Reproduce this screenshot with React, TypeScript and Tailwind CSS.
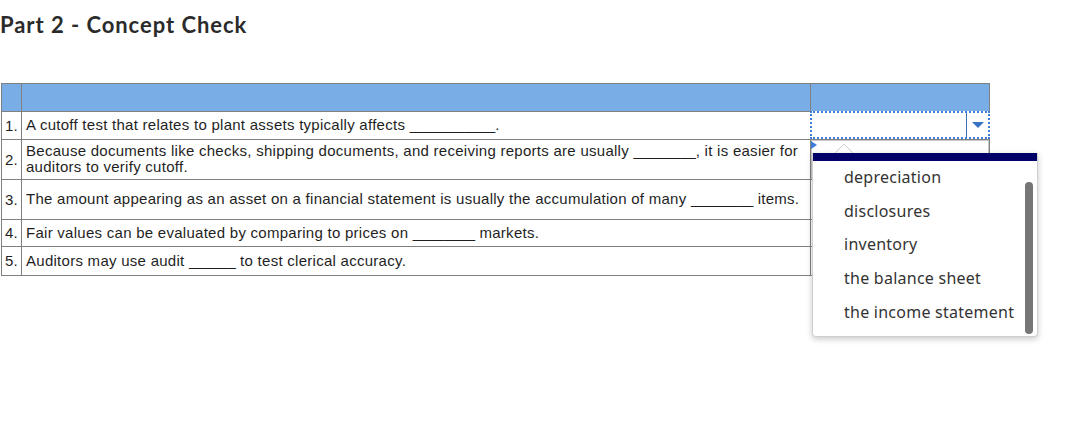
const rows = [
  { n: "1.", h: "h-[28px]", parts: ["A cutoff test that relates to plant assets typically affects ", "___________", "."] },
  {
    n: "2.",
    h: "h-[40px]",
    parts: [
      "Because documents like checks, shipping documents, and receiving reports are usually ",
      "________",
      ", it is easier for auditors to verify cutoff.",
    ],
  },
  {
    n: "3.",
    h: "h-[40px]",
    parts: ["The amount appearing as an asset on a financial statement is usually the accumulation of many ", "________", " items."],
  },
  { n: "4.", h: "h-[27px]", parts: ["Fair values can be evaluated by comparing to prices on ", "________", " markets."] },
  { n: "5.", h: "h-[29px]", parts: ["Auditors may use audit ", "______", " to test clerical accuracy."] },
];

const options = ["depreciation", "disclosures", "inventory", "the balance sheet", "the income statement"];

function SelectCell({ index }: { index: number }) {
  if (index === 0) {
    return (
      <div className="-ml-px -mt-px flex h-[28px] w-[180px] border-2 border-dotted border-[#3f7fd6] bg-white">
        <div className="flex-1" />
        <div className="flex w-[22px] items-center justify-center border-l border-[#3d6fb5]">
          <svg width="12" height="6" viewBox="0 0 12 6">
            <polygon points="0,0 12,0 6,6" fill="#3873c8" />
          </svg>
        </div>
      </div>
    );
  }
  if (index === 1) {
    return <div className="h-full border border-[#c8c8c8] bg-white" />;
  }
  return null;
}

export default function App() {
  return (
    <div className="h-[433px] w-[1086px] bg-white font-['Liberation_Sans',Arial,sans-serif] text-[#1f1f1f]">
      <h1 className="pt-[11px] font-['Lato',sans-serif] text-[22px] font-bold leading-[28px] tracking-[0.95px] text-[#2b2b2b]">
        Part 2 - Concept Check
      </h1>

      <div className="relative ml-px mt-[44px] w-[989px]">
        <div className="border-l border-t border-[#808080]">
          <div className="grid h-[28px] grid-cols-[20px_789px_179px] bg-[#79ade5]">
            <div className="border-b border-r border-[#808080]" />
            <div className="border-b border-r border-[#808080]" />
            <div className="border-b border-r border-[#808080]" />
          </div>
          {rows.map((row, i) => (
            <div key={row.n} className={`grid grid-cols-[20px_789px_179px] ${row.h}`}>
              <div className="flex items-center border-b border-r border-[#808080] pl-[3px] text-[15px] leading-[16px] tracking-[0.2px]">
                {row.n}
              </div>
              <div className="flex items-center border-b border-r border-[#808080] pl-[4px] pb-px text-[15px] leading-[16px] tracking-[0.27px]">
                <p>
                  {row.parts[0]}
                  <span className="text-[14px] tracking-normal">{row.parts[1]}</span>
                  {row.parts[2]}
                </p>
              </div>
              <div className="border-b border-r border-[#808080]">
                <SelectCell index={i} />
              </div>
            </div>
          ))}
        </div>

        {/* open dropdown for question 2 */}
        <svg className="absolute left-[810px] top-[58px]" width="6" height="8" viewBox="0 0 6 8">
          <polygon points="0,0 6,4 0,8" fill="#3b7dd8" />
        </svg>
        <svg className="absolute left-[832px] top-[60px]" width="22" height="11" viewBox="0 0 22 11">
          <polygon points="1,11 11,1 21,11" fill="#fff" stroke="#cfcfcf" strokeWidth="1" />
        </svg>
        <div className="absolute left-[811px] top-[70px] w-[226px] overflow-hidden rounded-b-[4px] border-x border-b border-[#cfcfcf] bg-white shadow-[0_2px_6px_rgba(0,0,0,0.22)]">
          <div className="h-[8px] bg-[#000066]" />
          <div className="relative -mt-[1px] pb-[7px]">
            {options.map((o) => (
              <div
                key={o}
                className="flex h-[33.75px] items-center pl-[31px] font-['Noto_Sans',sans-serif] text-[16px] tracking-[0.25px] text-[#333]"
              >
                {o}
              </div>
            ))}
            <div className="absolute right-[4px] top-[22px] h-[152px] w-[8px] rounded-full bg-[#767676]" />
          </div>
        </div>
      </div>
    </div>
  );
}
